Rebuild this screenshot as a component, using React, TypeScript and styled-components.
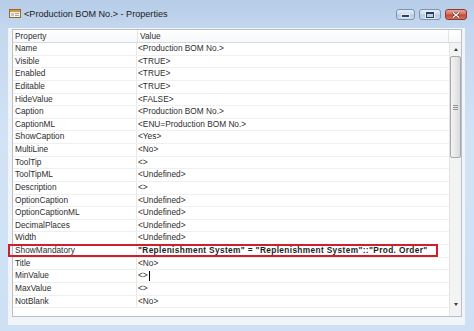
import React from "react";
import styled, { createGlobalStyle, css } from "styled-components";

const Global = createGlobalStyle`
  html, body { margin: 0; padding: 0; width: 474px; height: 331px; overflow: hidden; }
  body { font-family: "Liberation Sans", Arial, sans-serif; }
  #root { width: 474px; height: 331px; }
`;

const Window = styled.div`
  width: 474px;
  height: 331px;
  box-sizing: border-box;
  display: flex;
  flex-direction: column;
  background: linear-gradient(to bottom, #b6cce7 0px, #c3d7ee 28px, #d2e3f5 140px, #cde0f4 331px);
`;

const TitleBar = styled.div`
  height: 28px;
  flex: none;
  display: flex;
  align-items: flex-start;
  padding: 0 7px 0 9px;
  box-sizing: border-box;
`;

const TitleIcon = styled.svg`
  width: 12px;
  height: 9px;
  margin-top: 9px;
  flex: none;
`;

const TitleText = styled.div`
  margin-left: 3px;
  margin-top: 9px;
  font-size: 9.1px;
  line-height: 10px;
  color: #1b1b1b;
  white-space: nowrap;
`;

const Buttons = styled.div`
  margin-left: auto;
  margin-top: 9px;
  display: flex;
  gap: 4px;
`;

const CapButton = styled.div<{ $kind: "min" | "max" | "close" }>`
  height: 11px;
  width: ${(p) => (p.$kind === "min" ? 19 : 22)}px;
  box-sizing: border-box;
  border: 1px solid #7d93b3;
  border-radius: 3px;
  display: flex;
  align-items: center;
  justify-content: center;
  background: linear-gradient(to bottom, #e6eef8 0%, #cfdcec 45%, #b8cbe3 55%, #c9daee 100%);
  ${(p) =>
    p.$kind === "close" &&
    css`
      border-color: #8a3a35;
      background: linear-gradient(to bottom, #e8a497 0%, #d7715f 45%, #c34a36 55%, #d7715a 100%);
    `}
`;

const MinGlyph = styled.div`
  width: 7px;
  height: 2px;
  margin-top: 3px;
  background: #2c3e58;
  border: 1px solid #e8eef6;
  box-sizing: content-box;
`;

const MaxGlyph = styled.div`
  width: 6px;
  height: 3px;
  border: 1px solid #2c3e58;
  border-top-width: 2px;
  outline: 1px solid #e8eef6;
`;

const Body = styled.div`
  flex: 1;
  display: flex;
  flex-direction: column;
  padding: 0 9px 6px 8px;
  min-height: 0;
`;

const Client = styled.div`
  flex: 1;
  display: flex;
  flex-direction: column;
  background: #f1f4f8;
  padding: 1px 3px 8px 4px;
  min-height: 0;
`;

const Grid = styled.div`
  flex: 1;
  display: flex;
  flex-direction: column;
  background: #ffffff;
  border: 1px solid #b9c0c9;
  min-height: 0;
  font-size: 8.3px;
  color: #2e2e2e;
`;

const HeaderRow = styled.div`
  height: 12px;
  flex: none;
  display: flex;
  border-bottom: 1px solid #d6d9dd;
  background: linear-gradient(to bottom, #ffffff, #f7f8fa);
`;

const HeaderCell = styled.div<{ $w?: number; $last?: boolean }>`
  ${(p) => (p.$w ? `width: ${p.$w}px; flex: none;` : "flex: 1;")}
  box-sizing: border-box;
  padding-left: 2px;
  line-height: 12px;
  white-space: nowrap;
  border-right: 1px solid #e2e4e8;
  ${(p) => p.$last && "border-right: none;"}
`;

const Content = styled.div`
  flex: 1;
  display: flex;
  min-height: 0;
`;

const Rows = styled.div`
  flex: 1;
  display: flex;
  flex-direction: column;
`;

const Row = styled.div<{ $marked?: boolean }>`
  height: 12.63px;
  flex: none;
  box-sizing: border-box;
  display: flex;
  border-bottom: 1px solid #efefef;
  position: relative;
  ${(p) =>
    p.$marked &&
    css`
      &::after {
        content: "";
        position: absolute;
        left: -5px;
        top: -1px;
        width: 430px;
        bottom: 0;
        box-sizing: border-box;
        border: 2px solid #cf1f2c;
      }
    `}
`;

const NameCell = styled.div`
  width: 124px;
  flex: none;
  box-sizing: border-box;
  padding-left: 2px;
  line-height: 11.6px;
  border-right: 1px solid #e8e8e8;
  white-space: nowrap;
`;

const ValueCell = styled.div<{ $bold?: boolean }>`
  flex: 1;
  padding-left: 1px;
  line-height: 11.6px;
  white-space: nowrap;
  display: flex;
  align-items: center;
  ${(p) => p.$bold && "font-weight: bold; color: #1e1e1e; letter-spacing: 0.36px;"}
`;

const Caret = styled.span`
  display: inline-block;
  width: 1px;
  height: 10px;
  background: #000;
  margin-left: 1px;
`;

const ScrollBar = styled.div`
  width: 12px;
  flex: none;
  display: flex;
  flex-direction: column;
  background: #f3f3f3;
  border-left: 1px solid #e4e4e4;
  box-sizing: border-box;
  padding-bottom: 6px;
`;

const ArrowButton = styled.div`
  height: 12px;
  flex: none;
  display: flex;
  align-items: center;
  justify-content: center;
`;

const Arrow = styled.div<{ $down?: boolean }>`
  width: 0;
  height: 0;
  border-left: 2.5px solid transparent;
  border-right: 2.5px solid transparent;
  ${(p) => (p.$down ? "border-top: 3px solid #3a3a3a;" : "border-bottom: 3px solid #3a3a3a;")}
`;

const Thumb = styled.div`
  margin: 1px 0 0 0;
  height: 102px;
  flex: none;
  box-sizing: border-box;
  border: 1px solid #a3a9b0;
  border-radius: 2px;
  background: linear-gradient(to right, #f4f4f4, #e6e6e6 60%, #d9d9d9);
  display: flex;
  flex-direction: column;
  align-items: center;
  justify-content: center;
  gap: 1px;
`;

const Grip = styled.div`
  width: 5px;
  height: 1px;
  background: #8d939a;
`;

const Spacer = styled.div`
  flex: 1;
`;

type Prop = { name: string; value: string; bold?: boolean; caret?: boolean };

const props: Prop[] = [
  { name: "Name", value: "<Production BOM No.>" },
  { name: "Visible", value: "<TRUE>" },
  { name: "Enabled", value: "<TRUE>" },
  { name: "Editable", value: "<TRUE>" },
  { name: "HideValue", value: "<FALSE>" },
  { name: "Caption", value: "<Production BOM No.>" },
  { name: "CaptionML", value: "<ENU=Production BOM No.>" },
  { name: "ShowCaption", value: "<Yes>" },
  { name: "MultiLine", value: "<No>" },
  { name: "ToolTip", value: "<>" },
  { name: "ToolTipML", value: "<Undefined>" },
  { name: "Description", value: "<>" },
  { name: "OptionCaption", value: "<Undefined>" },
  { name: "OptionCaptionML", value: "<Undefined>" },
  { name: "DecimalPlaces", value: "<Undefined>" },
  { name: "Width", value: "<Undefined>" },
  {
    name: "ShowMandatory",
    value: '"Replenishment System" = "Replenishment System"::"Prod. Order"',
    bold: true,
  },
  { name: "Title", value: "<No>" },
  { name: "MinValue", value: "<>", caret: true },
  { name: "MaxValue", value: "<>" },
  { name: "NotBlank", value: "<No>" },
];

export default function App() {
  return (
    <>
      <Global />
      <Window>
        <TitleBar>
          <TitleIcon viewBox="0 0 12 9">
            <rect x="0.5" y="0.5" width="11" height="8" fill="#f3f1ea" stroke="#8b6a3a" />
            <rect x="1" y="1" width="10" height="2" fill="#d99a3c" />
            <rect x="2" y="4" width="3" height="3" fill="#c9c4b6" />
            <rect x="6" y="4" width="4" height="1" fill="#a9a394" />
            <rect x="6" y="6" width="4" height="1" fill="#a9a394" />
          </TitleIcon>
          <TitleText>&lt;Production BOM No.&gt; - Properties</TitleText>
          <Buttons>
            <CapButton $kind="min">
              <MinGlyph />
            </CapButton>
            <CapButton $kind="max">
              <MaxGlyph />
            </CapButton>
            <CapButton $kind="close">
              <svg width="8" height="6" viewBox="0 0 8 6">
                <path d="M1 0.5 L7 5.5 M7 0.5 L1 5.5" stroke="#5a1a14" strokeWidth="2.6" />
                <path d="M1 0.5 L7 5.5 M7 0.5 L1 5.5" stroke="#ffffff" strokeWidth="1.5" />
              </svg>
            </CapButton>
          </Buttons>
        </TitleBar>
        <Body>
          <Client>
            <Grid>
              <HeaderRow>
                <HeaderCell $w={125}>Property</HeaderCell>
                <HeaderCell>Value</HeaderCell>
                <HeaderCell $w={12} $last />
              </HeaderRow>
              <Content>
                <Rows>
                  {props.map((p) => (
                    <Row key={p.name} $marked={p.bold}>
                      <NameCell>{p.name}</NameCell>
                      <ValueCell $bold={p.bold}>
                        {p.value}
                        {p.caret && <Caret />}
                      </ValueCell>
                    </Row>
                  ))}
                </Rows>
                <ScrollBar>
                  <ArrowButton>
                    <Arrow />
                  </ArrowButton>
                  <Thumb>
                    <Grip />
                    <Grip />
                    <Grip />
                  </Thumb>
                  <Spacer />
                  <ArrowButton>
                    <Arrow $down />
                  </ArrowButton>
                </ScrollBar>
              </Content>
            </Grid>
          </Client>
        </Body>
      </Window>
    </>
  );
}
